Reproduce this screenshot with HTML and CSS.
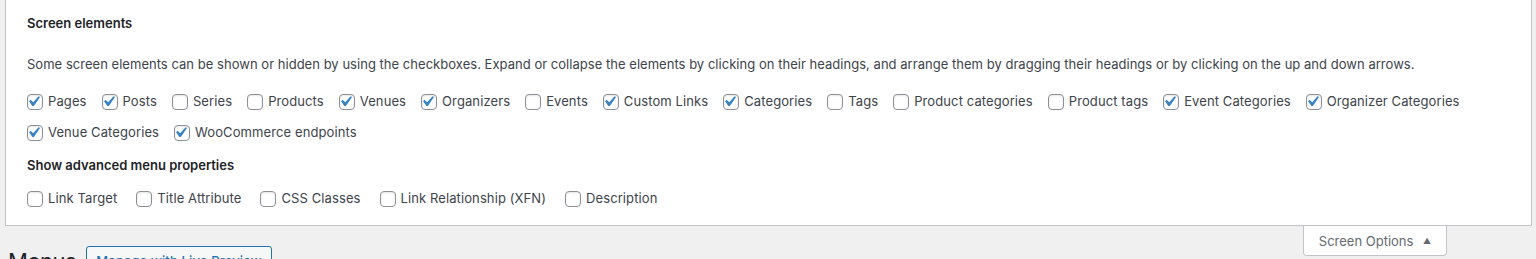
FILE: index.html
```html
<!DOCTYPE html>
<html lang="en">
  <head>
    <meta charset="UTF-8" />
    <meta name="viewport" content="width=device-width, initial-scale=1.0" />
    <title>Menus</title>
    <link rel="stylesheet" href="styles.css">
  </head>
  <body>
    <div class="screen-meta">
      <fieldset class="prefs">
        <legend>Screen elements</legend>
        <p>Some screen elements can be shown or hidden by using the checkboxes. Expand or collapse the elements by clicking on their headings, and arrange them by dragging their headings or by clicking on the up and down arrows.</p>
        <div class="options">
          <label><span class="box checked"><svg viewBox="0 0 20 20"><path d="M14.83 4.89l1.34.94-5.81 8.38H9.02L5.78 9.67l1.34-1.25 2.57 2.4z"/></svg></span>Pages</label>
          <label><span class="box checked"><svg viewBox="0 0 20 20"><path d="M14.83 4.89l1.34.94-5.81 8.38H9.02L5.78 9.67l1.34-1.25 2.57 2.4z"/></svg></span>Posts</label>
          <label><span class="box"></span>Series</label>
          <label><span class="box"></span>Products</label>
          <label><span class="box checked"><svg viewBox="0 0 20 20"><path d="M14.83 4.89l1.34.94-5.81 8.38H9.02L5.78 9.67l1.34-1.25 2.57 2.4z"/></svg></span>Venues</label>
          <label><span class="box checked"><svg viewBox="0 0 20 20"><path d="M14.83 4.89l1.34.94-5.81 8.38H9.02L5.78 9.67l1.34-1.25 2.57 2.4z"/></svg></span>Organizers</label>
          <label><span class="box"></span>Events</label>
          <label><span class="box checked"><svg viewBox="0 0 20 20"><path d="M14.83 4.89l1.34.94-5.81 8.38H9.02L5.78 9.67l1.34-1.25 2.57 2.4z"/></svg></span>Custom Links</label>
          <label><span class="box checked"><svg viewBox="0 0 20 20"><path d="M14.83 4.89l1.34.94-5.81 8.38H9.02L5.78 9.67l1.34-1.25 2.57 2.4z"/></svg></span>Categories</label>
          <label><span class="box"></span>Tags</label>
          <label><span class="box"></span>Product categories</label>
          <label><span class="box"></span>Product tags</label>
          <label><span class="box checked"><svg viewBox="0 0 20 20"><path d="M14.83 4.89l1.34.94-5.81 8.38H9.02L5.78 9.67l1.34-1.25 2.57 2.4z"/></svg></span>Event Categories</label>
          <label><span class="box checked"><svg viewBox="0 0 20 20"><path d="M14.83 4.89l1.34.94-5.81 8.38H9.02L5.78 9.67l1.34-1.25 2.57 2.4z"/></svg></span>Organizer Categories</label>
          <label><span class="box checked"><svg viewBox="0 0 20 20"><path d="M14.83 4.89l1.34.94-5.81 8.38H9.02L5.78 9.67l1.34-1.25 2.57 2.4z"/></svg></span>Venue Categories</label>
          <label><span class="box checked"><svg viewBox="0 0 20 20"><path d="M14.83 4.89l1.34.94-5.81 8.38H9.02L5.78 9.67l1.34-1.25 2.57 2.4z"/></svg></span>WooCommerce endpoints</label>
        </div>
      </fieldset>
      <fieldset class="prefs advanced">
        <legend>Show advanced menu properties</legend>
        <div class="options">
          <label><span class="box"></span>Link Target</label>
          <label><span class="box"></span>Title Attribute</label>
          <label><span class="box"></span>CSS Classes</label>
          <label><span class="box"></span>Link Relationship (XFN)</label>
          <label><span class="box"></span>Description</label>
        </div>
      </fieldset>
    </div>

    <div class="meta-links">
      <button class="meta-toggle">Screen Options <span class="arrow">&#9650;</span></button>
    </div>

    <div class="wrap">
      <h1>Menus <a class="title-action" href="#">Manage with Live Preview</a></h1>
    </div>
  </body>
</html>
```

FILE: styles.css
```css
* {
  box-sizing: border-box;
}

body {
  margin: 0;
  background: #f0f0f1;
  color: #3c434a;
  font-family: "Inter", "Noto Sans", sans-serif;
  font-size: 13px;
  overflow: hidden;
}

.screen-meta {
  background: #fff;
  border: 1px solid #c3c4c7;
  border-top: none;
  margin: 0 4px 0 5px;
  padding: 13px 20px 11px 21px;
}

.prefs {
  border: none;
  margin: 0;
  padding: 0;
}

.prefs legend {
  padding: 0;
  line-height: 20px;
  font-weight: 600;
  color: #1d2327;
}

.prefs p {
  margin: 21px 0 12px;
  line-height: 20px;
  letter-spacing: 0.03px;
}

.options {
  display: flex;
  flex-wrap: wrap;
  column-gap: 15px;
}

.options label {
  display: flex;
  align-items: center;
  line-height: 31px;
  letter-spacing: 0.1px;
}

.box {
  position: relative;
  width: 16px;
  height: 16px;
  margin-right: 5px;
  border: 1px solid #8c8f94;
  border-radius: 4px;
  background: #fff;
  box-shadow: inset 0 1px 2px rgba(0, 0, 0, 0.1);
}

.box svg {
  position: absolute;
  top: -4px;
  left: -5px;
  width: 21px;
  height: 21px;
  fill: #3582c4;
}

.advanced {
  margin-top: 7px;
}

.advanced .options {
  margin-top: 8px;
  column-gap: 19px;
}

.meta-links {
  float: right;
  margin-right: 89px;
}

.meta-toggle {
  display: block;
  width: 144px;
  height: 30px;
  padding: 0;
  background: #fff;
  border: 1px solid #c3c4c7;
  border-top: none;
  border-radius: 0 0 4px 4px;
  color: #646970;
  font-family: inherit;
  font-size: 13px;
}

.meta-toggle .arrow {
  font-size: 8px;
  margin-left: 6px;
  vertical-align: 2px;
}

.wrap {
  padding: 20px 0 0 8px;
}

.wrap h1 {
  display: flex;
  align-items: center;
  gap: 10px;
  margin: 0;
  font-size: 22px;
  font-weight: 400;
  letter-spacing: -0.4px;
  line-height: 29px;
  color: #1d2327;
}

.title-action {
  padding: 4px 9px;
  border: 1px solid #2271b1;
  border-radius: 3px;
  background: #f6f7f7;
  color: #2271b1;
  font-size: 13px;
  font-weight: 500;
  letter-spacing: 0.15px;
  line-height: 20px;
  text-decoration: none;
}
```
